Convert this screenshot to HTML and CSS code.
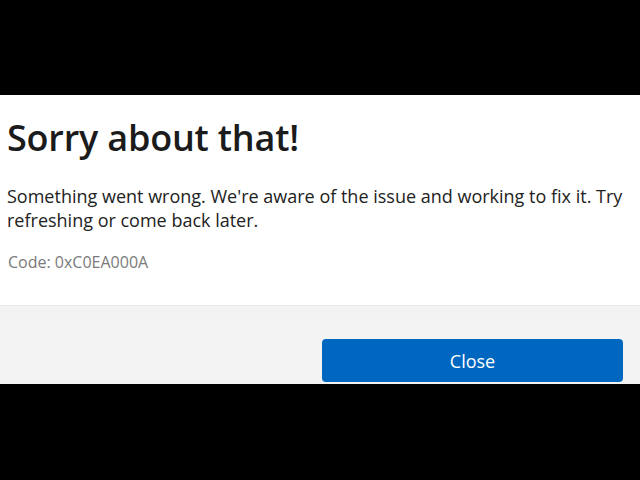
FILE: index.html
```html
<!DOCTYPE html>
<html lang="en">
<head>
<meta charset="utf-8">
<title>Sorry about that!</title>
<link rel="stylesheet" href="styles.css">
</head>
<body>
<div class="band"></div>
<main class="dialog">
  <section class="content">
    <h1 class="title">Sorry about that!</h1>
    <p class="message">Something went wrong. We're aware of the issue and working to fix it. Try refreshing or come back later.</p>
    <p class="code">Code: 0xC0EA000A</p>
  </section>
  <footer class="footer">
    <div class="spacer"></div>
    <button class="close-btn" type="button">Close</button>
  </footer>
</main>
<div class="band"></div>
</body>
</html>
```
FILE: styles.css
```css
html, body {
  margin: 0;
  padding: 0;
  background: #000;
  height: 480px;
  overflow: hidden;
}
body {
  display: flex;
  flex-direction: column;
  font-family: "Open Sans", "Noto Sans", sans-serif;
}
.band {
  height: 95px;
  flex: none;
  background: #000;
}
.dialog {
  flex: none;
  display: flex;
  flex-direction: column;
}
.content {
  background: #fff;
  height: 210px;
  box-sizing: border-box;
  padding: 21px 8px 0 7px;
}
.title {
  margin: 0;
  font-size: 36px;
  line-height: 44px;
  font-weight: 600;
  letter-spacing: -0.2px;
  color: #1b1b1b;
}
.message {
  margin: 24px 0 0 0;
  font-size: 18px;
  line-height: 24px;
  color: #222;
}
.code {
  margin: 20px 0 0 1px;
  font-size: 16px;
  line-height: 20px;
  color: #7a7a7a;
}
.footer {
  height: 79px;
  box-sizing: border-box;
  background: #f3f3f3;
  border-top: 1px solid #e8e8e8;
  display: grid;
  grid-template-columns: 1fr 301px;
  padding: 33px 17px 0 8px;
}
.close-btn {
  height: 43px;
  border: none;
  border-radius: 4px;
  background: #0067c0;
  color: #fff;
  font-family: inherit;
  font-size: 18px;
  padding: 0;
}
```
